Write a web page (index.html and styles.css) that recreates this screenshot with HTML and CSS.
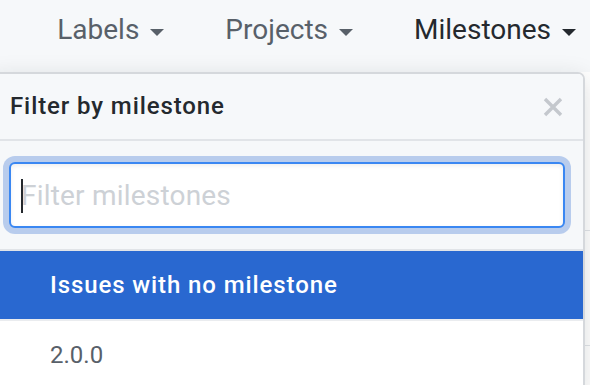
FILE: index.html
```html
<!DOCTYPE html>
<html lang="en">
<head>
<meta charset="utf-8">
<title>Filter by milestone</title>
<link rel="stylesheet" href="styles.css">
</head>
<body>
<div class="page">
  <nav class="filter-bar">
    <span class="filter-item">Labels<span class="caret"></span></span>
    <span class="filter-item">Projects<span class="caret"></span></span>
    <span class="filter-item active">Milestones<span class="caret"></span></span>
  </nav>
  <div class="issues">
    <div class="issue-row first"></div>
    <div class="issue-row"></div>
    <div class="issue-row"></div>
  </div>

  <div class="menu">
    <div class="menu-header">
      <span class="menu-title">Filter by milestone</span>
      <svg class="close" width="20" height="20" viewBox="0 0 20 20" aria-hidden="true">
        <path d="M2 2 L18 18 M18 2 L2 18" stroke="currentColor" stroke-width="3.4" stroke-linecap="butt" fill="none"/>
      </svg>
    </div>
    <div class="menu-filter">
      <div class="input-wrap">
        <input class="filter-input" type="text" placeholder="Filter milestones">
        <span class="fake-caret"></span>
      </div>
    </div>
    <div class="menu-list">
      <div class="menu-item selected">Issues with no milestone</div>
      <div class="menu-item">2.0.0</div>
    </div>
  </div>
</div>
</body>
</html>
```
FILE: styles.css
```css
* { box-sizing: border-box; }

html, body {
  margin: 0;
  padding: 0;
  width: 590px;
  height: 385px;
  overflow: hidden;
  background: #ffffff;
  font-family: Roboto, "Liberation Sans", sans-serif;
}

.page {
  position: relative;
  width: 590px;
  height: 385px;
  overflow: hidden;
}

.filter-bar {
  display: flex;
  align-items: flex-start;
  justify-content: flex-end;
  gap: 61px;
  height: 72px;
  padding: 10px 14px 0 0;
  background: #f6f8fa;
  font-size: 28px;
  line-height: 40px;
  color: #586069;
}

.filter-item {
  display: flex;
  align-items: center;
  height: 40px;
  white-space: nowrap;
}

.filter-item.active { color: #24292e; }

.caret {
  display: inline-block;
  width: 0;
  height: 0;
  margin-left: 11px;
  margin-top: 4px;
  border-top: 7px solid currentColor;
  border-left: 7px solid transparent;
  border-right: 7px solid transparent;
}

.issues { background: #fff; }

.issue-row {
  height: 115px;
  border-bottom: 1px solid #e1e4e8;
}

.issue-row.first { height: 159px; }

.menu {
  position: absolute;
  top: 72px;
  left: -11px;
  width: 596px;
  background: #fff;
  border: 2px solid #d5d8dc;
  border-radius: 7px;
  box-shadow: 0 6px 24px rgba(27, 31, 35, 0.15);
  overflow: hidden;
}

.menu-header {
  display: flex;
  align-items: center;
  justify-content: space-between;
  padding: 16px 20px 16px 19px;
  background: #f6f8fa;
  border-bottom: 2px solid #e1e4e8;
  font-size: 24px;
  line-height: 33px;
  font-weight: 500;
  letter-spacing: 0.9px;
  color: #24292e;
}

.close { color: #c4c8cd; display: block; }

.menu-filter {
  padding: 21px 18px;
  background: #f6f8fa;
  border-bottom: 2px solid #e1e4e8;
}

.input-wrap { position: relative; }

.filter-input {
  display: block;
  width: 100%;
  height: 66px;
  margin: 0;
  padding: 0 10px;
  font-family: Roboto, "Liberation Sans", sans-serif;
  font-size: 28px;
  letter-spacing: 0.2px;
  color: #24292e;
  background: #fff;
  border: 2px solid #3a87f2;
  border-radius: 6px;
  outline: none;
  box-shadow: inset 0 2px 4px rgba(27, 31, 35, 0.075), 0 0 0 6px rgba(41, 104, 208, 0.3);
}

.filter-input::placeholder { color: #cdd1d6; }

.fake-caret {
  position: absolute;
  left: 12px;
  top: 17px;
  width: 2px;
  height: 34px;
  background: #24292e;
}

.menu-item {
  padding: 16px 20px 16px 59px;
  font-size: 24px;
  line-height: 36px;
  color: #586069;
  border-bottom: 2px solid #eaecef;
  white-space: nowrap;
}

.menu-item.selected {
  background: #2968d0;
  color: #ffffff;
  font-weight: 500;
  letter-spacing: 0.9px;
}
```
